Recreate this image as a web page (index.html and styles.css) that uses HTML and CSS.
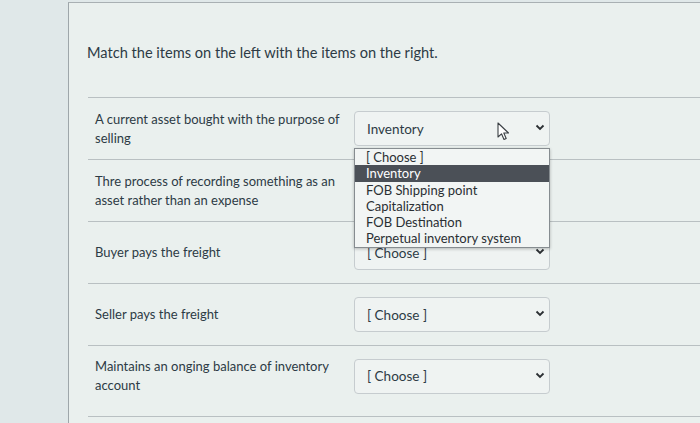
FILE: index.html
```html
<!DOCTYPE html>
<html lang="en">
<head>
  <meta charset="UTF-8" />
  <title>Matching Question</title>
  <link rel="stylesheet" href="styles.css">
</head>
<body>
  <div class="card">
    <div class="question">Match the items on the left with the items on the right.</div>

    <div class="matches">
      <div class="match-row">
        <div class="match-label">A current asset bought with the purpose of selling</div>
        <div class="match-select open">
          <span>Inventory</span>
          <svg class="chevron" width="10" height="7" viewBox="0 0 10 7"><path d="M1.5 1.5 L5 5 L8.5 1.5" fill="none" stroke="#2b2f33" stroke-width="1.8"/></svg>
          <svg class="cursor" width="14" height="20" viewBox="0 0 14 20"><path d="M1 1 L1 15 L4.5 11.8 L7 17.5 L9.2 16.5 L6.8 11 L11.5 11 Z" fill="#fff" stroke="#3a3f44" stroke-width="1.1" stroke-linejoin="round"/></svg>
          <ul class="dropdown">
            <li>[ Choose ]</li>
            <li class="active">Inventory</li>
            <li>FOB Shipping point</li>
            <li>Capitalization</li>
            <li>FOB Destination</li>
            <li>Perpetual inventory system</li>
          </ul>
        </div>
      </div>

      <div class="match-row">
        <div class="match-label">Thre process of recording something as an asset rather than an expense</div>
        <div class="match-select covered">
          <svg class="chevron" width="10" height="7" viewBox="0 0 10 7"><path d="M1.5 1.5 L5 5 L8.5 1.5" fill="none" stroke="#2b2f33" stroke-width="1.8"/></svg>
        </div>
      </div>

      <div class="match-row">
        <div class="match-label">Buyer pays the freight</div>
        <div class="match-select">
          <span>[ Choose ]</span>
          <svg class="chevron" width="10" height="7" viewBox="0 0 10 7"><path d="M1.5 1.5 L5 5 L8.5 1.5" fill="none" stroke="#2b2f33" stroke-width="1.8"/></svg>
        </div>
      </div>

      <div class="match-row">
        <div class="match-label">Seller pays the freight</div>
        <div class="match-select">
          <span>[ Choose ]</span>
          <svg class="chevron" width="10" height="7" viewBox="0 0 10 7"><path d="M1.5 1.5 L5 5 L8.5 1.5" fill="none" stroke="#2b2f33" stroke-width="1.8"/></svg>
        </div>
      </div>

      <div class="match-row last">
        <div class="match-label">Maintains an onging balance of inventory account</div>
        <div class="match-select">
          <span>[ Choose ]</span>
          <svg class="chevron" width="10" height="7" viewBox="0 0 10 7"><path d="M1.5 1.5 L5 5 L8.5 1.5" fill="none" stroke="#2b2f33" stroke-width="1.8"/></svg>
        </div>
      </div>
    </div>
  </div>
</body>
</html>
```

FILE: styles.css
```css
body {
  margin: 0;
  background: #e0e8e9;
  font-family: Lato, "Open Sans", sans-serif;
  color: #2d3b45;
  overflow: hidden;
}

.card {
  margin: 2px 0 0 68px;
  height: 421px;
  box-sizing: border-box;
  border-left: 1px solid #9ea6aa;
  border-top: 1px solid #a9b0b3;
  background: #eaf0ee;
}

.question {
  height: 94px;
  box-sizing: border-box;
  padding: 40px 0 0 18px;
  font-size: 14.6px;
  line-height: 20px;
}

.matches {
  margin-left: 19px;
}

.match-row {
  display: flex;
  align-items: center;
  height: 62px;
  box-sizing: border-box;
  border-top: 1px solid #b9c0c2;
}
.match-row.last {
  height: 72px;
  padding-bottom: 10px;
  border-bottom: 1px solid #b9c0c2;
}

.match-label {
  width: 259px;
  padding-left: 7px;
  font-size: 13px;
  line-height: 19px;
}

.match-select {
  position: relative;
  width: 196px;
  height: 35px;
  box-sizing: border-box;
  display: flex;
  align-items: center;
  justify-content: space-between;
  padding: 0 4px 0 12px;
  border: 1px solid #c6cccf;
  border-radius: 4px;
  background: #eff3f2;
  font-size: 13.5px;
}
.match-select.covered {
  justify-content: flex-end;
}

.chevron {
  margin-top: -2px;
}

.cursor {
  position: absolute;
  left: 142px;
  top: 10px;
}

.dropdown {
  position: absolute;
  top: 36px;
  left: -1px;
  width: 196px;
  margin: 0;
  padding: 0;
  list-style: none;
  box-sizing: border-box;
  border: 1px solid #868c90;
  background: #f2f5f4;
  box-shadow: 0 1px 3px rgba(0, 0, 0, 0.25);
  z-index: 10;
}
.dropdown li {
  height: 16.3px;
  line-height: 16.3px;
  padding-left: 11px;
  font-size: 13px;
  color: #2a2f33;
}
.dropdown li.active {
  background: #4b5057;
  color: #ffffff;
}
```
